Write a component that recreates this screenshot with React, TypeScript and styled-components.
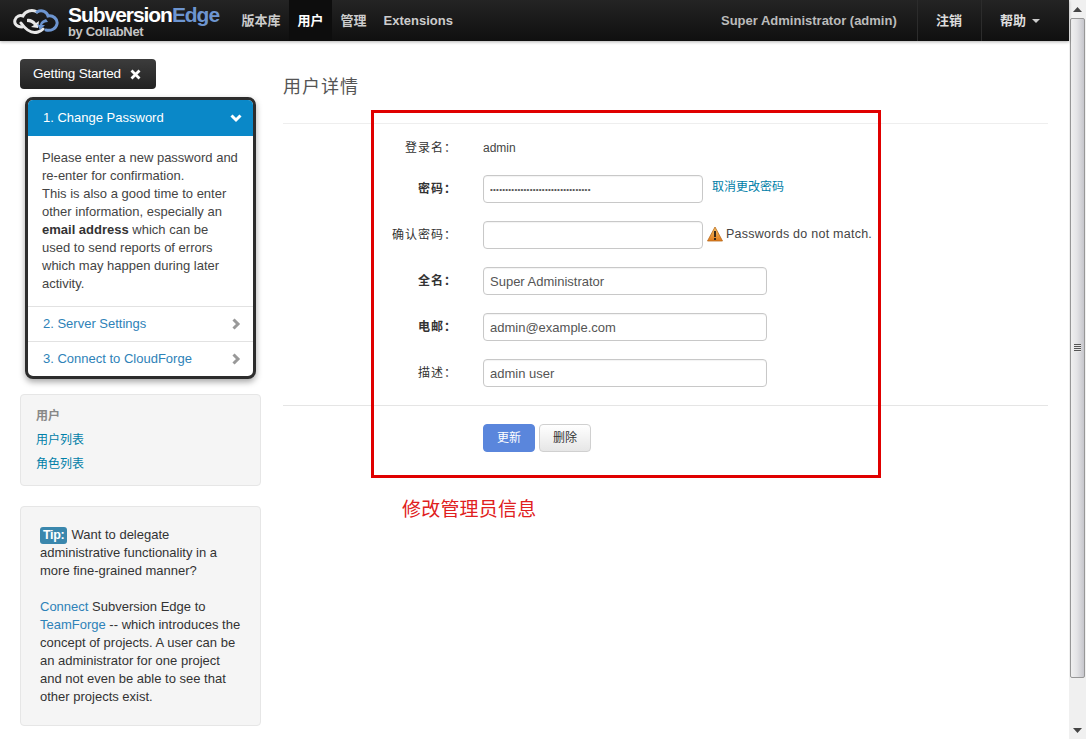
import React from 'react'
import styled, { createGlobalStyle } from 'styled-components'

const GlobalStyle = createGlobalStyle`
  html, body {
    margin: 0;
    height: 100%;
    overflow: hidden;
    background: #fff;
  }
  body {
    font-family: "Liberation Sans", "Noto Sans CJK SC", sans-serif;
    font-size: 13px;
    line-height: 18px;
    color: #333;
  }
  * { box-sizing: border-box; }
`

const Window = styled.div`
  display: flex;
  width: 1086px;
  height: 739px;
  overflow: hidden;
`
const Content = styled.div`
  position: relative;
  width: 1069px;
  flex: none;
`
const Navbar = styled.div`
  display: flex;
  align-items: stretch;
  height: 41px;
  background: linear-gradient(#242424, #0f0f0f);
  box-shadow: 0 1px 3px rgba(0, 0, 0, 0.3);
  font-weight: bold;
  color: #ccc;
`
const Brand = styled.div`
  display: flex;
  align-items: center;
  width: 233px;
  padding-left: 13px;
  flex: none;
`
const BrandText = styled.div`
  margin-left: 9px;
  display: flex;
  flex-direction: column;
`
const BrandName = styled.div`
  font-size: 21px;
  line-height: 21px;
  letter-spacing: -1.05px;
  color: #fff;
  span {
    color: #6d95d0;
  }
`
const BrandBy = styled.div`
  font-size: 13px;
  line-height: 13px;
  letter-spacing: -0.35px;
  color: #c4c4c4;
`
const NavItem = styled.div<{ $active?: boolean }>`
  display: flex;
  align-items: center;
  padding: 0 8.5px;
  background: ${(p) => (p.$active ? '#0d0d0d' : 'transparent')};
  color: ${(p) => (p.$active ? '#fff' : '#ccc')};
`
const NavRight = styled.div`
  display: flex;
  align-items: stretch;
  margin-left: auto;
`
const UserName = styled.div`
  display: flex;
  align-items: center;
  width: 196px;
  color: #bbb;
`
const NavAction = styled.div<{ $width: number }>`
  display: flex;
  align-items: center;
  gap: 6px;
  width: ${(p) => p.$width}px;
  padding-left: 18px;
  border-left: 1px solid #2c2c2c;
  color: #ddd;
`
const Caret = styled.span`
  width: 0;
  height: 0;
  border-left: 4px solid transparent;
  border-right: 4px solid transparent;
  border-top: 4px solid #ccc;
`
const Columns = styled.div`
  display: flex;
  padding: 18px 21px 0 20px;
`
const Sidebar = styled.div`
  width: 241px;
  flex: none;
`
const StartedButton = styled.div`
  display: flex;
  align-items: center;
  gap: 9px;
  width: 136px;
  height: 30px;
  padding-left: 13px;
  background: linear-gradient(#3c3c3c, #222);
  border-radius: 4px;
  color: #fff;
  font-size: 13.5px;
  letter-spacing: -0.2px;
`
const Wizard = styled.div`
  width: 231px;
  margin: 8px 0 15px 5px;
  border: 3px solid #2d2d2d;
  border-radius: 8px;
  background: #fff;
  box-shadow: 0 3px 6px rgba(0, 0, 0, 0.35);
  overflow: hidden;
`
const WizardHead = styled.div`
  display: flex;
  align-items: center;
  justify-content: space-between;
  height: 36px;
  padding: 0 11px 0 15px;
  background: #0a88c8;
  color: #fff;
`
const WizardBody = styled.div`
  padding: 13px 14px 13px;
  color: #444;
  b {
    color: #333;
  }
`
const WizardStep = styled.div`
  display: flex;
  align-items: center;
  justify-content: space-between;
  height: 35px;
  padding: 0 11px 0 15px;
  border-top: 1px solid #e2e2e2;
  color: #2e82b8;
`
const Well = styled.div<{ $pad: string }>`
  margin-bottom: 20px;
  padding: ${(p) => p.$pad};
  background: #f5f5f5;
  border: 1px solid #e6e6e6;
  border-radius: 4px;
`
const WellTitle = styled.div`
  font-size: 12px;
  line-height: 24px;
  font-weight: bold;
  color: #888;
`
const WellLink = styled.div`
  font-size: 12px;
  line-height: 24px;
  color: #0080a8;
`
const TipBadge = styled.span`
  display: inline-block;
  height: 17px;
  margin-right: 4px;
  padding: 0 3px;
  background: #3a87ad;
  border-radius: 3px;
  color: #fff;
  font-size: 12.5px;
  font-weight: bold;
  line-height: 17px;
  letter-spacing: -0.3px;
`
const TipLink = styled.span`
  color: #2e82b8;
`
const TipGap = styled.div`
  height: 18px;
`
const Main = styled.div`
  width: 765px;
  margin-left: 22px;
`
const Title = styled.div`
  height: 65px;
  padding-top: 16px;
  border-bottom: 1px solid #eee;
  font-size: 18px;
  line-height: 24px;
  letter-spacing: 1px;
  color: #555;
`
const Form = styled.div`
  padding-top: 10px;
`
const Row = styled.div<{ $gap: number }>`
  display: flex;
  align-items: center;
  height: 28px;
  margin-bottom: ${(p) => p.$gap}px;
`
const Label = styled.div<{ $strong?: boolean }>`
  width: 174px;
  margin-right: 26px;
  flex: none;
  text-align: right;
  font-size: 12px;
  letter-spacing: 1px;
  font-weight: ${(p) => (p.$strong ? 'bold' : 'normal')};
  color: #333;
`
const Value = styled.div`
  font-size: 12px;
  color: #444;
`
const Field = styled.input<{ $wide?: boolean }>`
  width: ${(p) => (p.$wide ? 284 : 220)}px;
  height: 28px;
  padding: 0 6px;
  background: #fff;
  border: 1px solid #c8c8c8;
  border-radius: 4px;
  outline: none;
  font-family: inherit;
  font-size: 13px;
  color: #555;
  box-shadow: inset 0 1px 1px rgba(0, 0, 0, 0.05);
  &[type='password'] {
    font-size: 8px;
    letter-spacing: 0.25px;
  }
`
const CancelLink = styled.a`
  margin: -4px 0 0 9px;
  font-size: 12px;
  color: #0080a8;
`
const WarningText = styled.span`
  display: flex;
  align-items: center;
  gap: 3px;
  margin: -3px 0 0 4px;
  font-size: 12.5px;
  letter-spacing: 0.25px;
  color: #444;
`
const Divider = styled.div`
  height: 1px;
  background: #e5e5e5;
`
const Actions = styled.div`
  display: flex;
  gap: 4px;
  padding: 18px 0 0 200px;
`
const Button = styled.div<{ $primary?: boolean }>`
  display: flex;
  align-items: center;
  justify-content: center;
  width: 52px;
  height: 28px;
  border-radius: 4px;
  font-size: 12px;
  background: ${(p) => (p.$primary ? '#5a86dc' : 'linear-gradient(#fff, #e6e6e6)')};
  border: 1px solid ${(p) => (p.$primary ? '#5a86dc' : '#d0d0d0')};
  color: ${(p) => (p.$primary ? '#fff' : '#333')};
`
const RedBox = styled.div`
  position: absolute;
  left: 371px;
  top: 110px;
  width: 510px;
  height: 368px;
  border: 3px solid #e00000;
`
const RedNote = styled.div`
  position: absolute;
  left: 402px;
  top: 497px;
  font-size: 19px;
  line-height: 26px;
  letter-spacing: 0.2px;
  color: #e02020;
`
const ScrollBar = styled.div`
  display: flex;
  flex-direction: column;
  align-items: center;
  width: 17px;
  flex: none;
  background: #f0f0f0;
`
const ScrollArrow = styled.div`
  display: flex;
  align-items: center;
  justify-content: center;
  width: 17px;
  height: 18px;
  flex: none;
`
const ScrollThumb = styled.div`
  display: flex;
  align-items: center;
  justify-content: center;
  width: 15px;
  height: 660px;
  flex: none;
  background: linear-gradient(90deg, #f0f0f0, #e4e4e6 45%, #c6c6cc);
  border: 1px solid #979797;
  border-radius: 2px;
`
const ScrollSpace = styled.div`
  flex: 1;
`
const Grip = styled.div`
  width: 7px;
  height: 8px;
  background: repeating-linear-gradient(#555 0, #555 1px, #e8e8e8 1px, #e8e8e8 2px);
`

const Logo = () => (
  <svg width="46" height="30" viewBox="0 0 46 30" fill="none">
    <path d="M9 21 C3 21 1 17 2 14 C3 10 7 9 10 10 C12 5 19 3 24 6" stroke="#e8e8e8" strokeWidth="3" strokeLinecap="round" />
    <path d="M8 17 C13 24 19 28 25 26 C28 25 29 24 30 23" stroke="#e8e8e8" strokeWidth="3" strokeLinecap="round" />
    <path d="M14 13 C17 12 21 14 23 17 L26 15 L25 22 L18 21 L21 19 C19 17 17 16 14 16 Z" fill="#e8e8e8" />
    <path d="M24 6 C29 3 34 6 35 10 C40 9 45 13 44 18 C43 23 38 25 33 24" stroke="#6d95d0" strokeWidth="3" strokeLinecap="round" />
    <path d="M33 13 C30 14 27 16 27 19 L24 18 L27 24 L32 19 L29 19 C30 17 32 16 35 16 Z" fill="#6d95d0" />
  </svg>
)

const Chevron = ({ dir, color }: { dir: 'down' | 'right'; color: string }) => (
  <svg width="12" height="12" viewBox="0 0 12 12" fill="none">
    <path
      d={dir === 'down' ? 'M1.5 3.5 L6 8 L10.5 3.5' : 'M3.5 1.5 L8 6 L3.5 10.5'}
      stroke={color}
      strokeWidth="3"
    />
  </svg>
)

const CloseIcon = () => (
  <svg width="11" height="11" viewBox="0 0 11 11" fill="none">
    <path d="M1.5 1.5 L9.5 9.5 M9.5 1.5 L1.5 9.5" stroke="#fff" strokeWidth="2.8" />
  </svg>
)

const WarningIcon = () => (
  <svg width="16" height="16" viewBox="0 0 16 16">
    <defs>
      <linearGradient id="warn" x1="0" y1="0" x2="0" y2="1">
        <stop offset="0" stopColor="#f9c66b" />
        <stop offset="1" stopColor="#e07a1a" />
      </linearGradient>
    </defs>
    <path d="M8 1 L15.5 15 H0.5 Z" fill="url(#warn)" stroke="#b8691c" strokeWidth="0.8" strokeLinejoin="round" />
    <rect x="7" y="5" width="2" height="6" fill="#3a2a1a" />
    <rect x="7" y="12" width="2" height="2" fill="#3a2a1a" />
  </svg>
)

const ArrowGlyph = ({ up }: { up?: boolean }) => (
  <svg width="9" height="5" viewBox="0 0 9 5">
    <path d={up ? 'M4.5 0 L9 5 H0 Z' : 'M0 0 H9 L4.5 5 Z'} fill="#444" />
  </svg>
)

const App: React.FC = () => {
  return (
    <Window>
      <GlobalStyle />
      <Content>
        <Navbar>
          <Brand>
            <Logo />
            <BrandText>
              <BrandName>
                Subversion<span>Edge</span>
              </BrandName>
              <BrandBy>by CollabNet</BrandBy>
            </BrandText>
          </Brand>
          <NavItem>版本库</NavItem>
          <NavItem $active>用户</NavItem>
          <NavItem>管理</NavItem>
          <NavItem>Extensions</NavItem>
          <NavRight>
            <UserName>Super Administrator (admin)</UserName>
            <NavAction $width={64}>注销</NavAction>
            <NavAction $width={88}>
              帮助 <Caret />
            </NavAction>
          </NavRight>
        </Navbar>

        <Columns>
          <Sidebar>
            <StartedButton>
              Getting Started <CloseIcon />
            </StartedButton>
            <Wizard>
              <WizardHead>
                1. Change Password
                <Chevron dir="down" color="#fff" />
              </WizardHead>
              <WizardBody>
                Please enter a new password and re-enter for confirmation.
                <br />
                This is also a good time to enter other information, especially an <b>email address</b> which can be
                used to send reports of errors which may happen during later activity.
              </WizardBody>
              <WizardStep>
                2. Server Settings
                <Chevron dir="right" color="#999" />
              </WizardStep>
              <WizardStep>
                3. Connect to CloudForge
                <Chevron dir="right" color="#999" />
              </WizardStep>
            </Wizard>
            <Well $pad="9px 15px 9px">
              <WellTitle>用户</WellTitle>
              <WellLink>用户列表</WellLink>
              <WellLink>角色列表</WellLink>
            </Well>
            <Well $pad="19px 19px 19px">
              <TipBadge>Tip:</TipBadge>
              Want to delegate administrative functionality in a more fine-grained manner?
              <TipGap />
              <TipLink>Connect</TipLink> Subversion Edge to <TipLink>TeamForge</TipLink> -- which introduces the
              concept of projects. A user can be an administrator for one project and not even be able to see that
              other projects exist.
            </Well>
          </Sidebar>

          <Main>
            <Title>用户详情</Title>
            <Form>
              <Row $gap={13}>
                <Label>登录名：</Label>
                <Value>admin</Value>
              </Row>
              <Row $gap={18}>
                <Label $strong>密码：</Label>
                <Field type="password" defaultValue="000000000000000000000000000000000" />
                <CancelLink>取消更改密码</CancelLink>
              </Row>
              <Row $gap={18}>
                <Label>确认密码：</Label>
                <Field />
                <WarningText>
                  <WarningIcon />
                  Passwords do not match.
                </WarningText>
              </Row>
              <Row $gap={18}>
                <Label $strong>全名：</Label>
                <Field $wide defaultValue="Super Administrator" />
              </Row>
              <Row $gap={18}>
                <Label $strong>电邮：</Label>
                <Field $wide defaultValue="admin@example.com" />
              </Row>
              <Row $gap={18}>
                <Label>描述：</Label>
                <Field $wide defaultValue="admin user" />
              </Row>
              <Divider />
              <Actions>
                <Button $primary>更新</Button>
                <Button>删除</Button>
              </Actions>
            </Form>
          </Main>
        </Columns>

        <RedBox />
        <RedNote>修改管理员信息</RedNote>
      </Content>
      <ScrollBar>
        <ScrollArrow>
          <ArrowGlyph up />
        </ScrollArrow>
        <ScrollThumb>
          <Grip />
        </ScrollThumb>
        <ScrollSpace />
        <ScrollArrow>
          <ArrowGlyph />
        </ScrollArrow>
      </ScrollBar>
    </Window>
  )
}

export default App
